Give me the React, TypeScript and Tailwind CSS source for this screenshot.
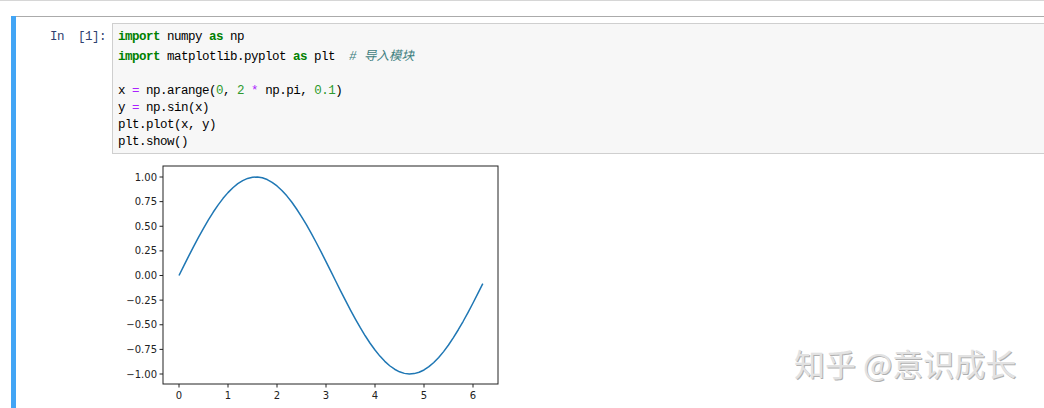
import React from 'react';

// data for the sine plot: same arange(0, 2*pi, 0.1) as the code cell
const xs: number[] = [];
for (let i = 0; i * 0.1 < 2 * Math.PI; i++) xs.push(i * 0.1);

const px = (x: number) => 67 + 49 * x;
const py = (y: number) => 121.5 - 98.5 * y;

const curve = xs.map((x, i) => `${i === 0 ? 'M' : 'L'}${px(x).toFixed(2)},${py(Math.sin(x)).toFixed(2)}`).join(' ');

const yTicks = [1, 0.75, 0.5, 0.25, 0, -0.25, -0.5, -0.75, -1];
const xTicks = [0, 1, 2, 3, 4, 5, 6];

const fmt = (v: number) => (v < 0 ? '\u2212' : '') + Math.abs(v).toFixed(2);

const Kw = ({ children }: { children: React.ReactNode }) => (
  <span className="font-bold text-[#008000]">{children}</span>
);
const Op = ({ children }: { children: React.ReactNode }) => <span className="text-[#aa22ff]">{children}</span>;
const Num = ({ children }: { children: React.ReactNode }) => <span className="text-[#2e9a2e]">{children}</span>;

const SinePlot = () => (
  <svg width={400} height={255} className="block" style={{ fontFamily: '"DejaVu Sans", sans-serif' }}>
    <rect x={51} y={12} width={335} height={218} fill="white" />
    <path d={curve} fill="none" stroke="#1f77b4" strokeWidth={1.5} strokeLinejoin="round" />
    <rect x={51} y={12} width={335} height={218} fill="none" stroke="#222" strokeWidth={1} />
    {yTicks.map((v) => (
      <g key={v}>
        <line x1={47.5} x2={51} y1={py(v)} y2={py(v)} stroke="#222" strokeWidth={1} />
        <text x={45} y={py(v) + 3.5} textAnchor="end" fontSize={10} fill="#222">
          {fmt(v)}
        </text>
      </g>
    ))}
    {xTicks.map((v) => (
      <g key={v}>
        <line x1={px(v)} x2={px(v)} y1={230} y2={233.5} stroke="#222" strokeWidth={1} />
        <text x={px(v)} y={245} textAnchor="middle" fontSize={10} fill="#222">
          {v}
        </text>
      </g>
    ))}
  </svg>
);

const App = () => {
  return (
    <div className="relative h-[408px] w-[1044px] overflow-hidden bg-white border-t border-[#d6d6d6]">
      <div className="mt-[15px] ml-[11px] flex flex-col border-l-[5px] border-[#42a5f5]">
        <div className="border-t border-[#ababab] pt-[6px]">
          {/* input row */}
          <div className="flex">
            <div
              className="w-[96px] shrink-0 pr-[6px] pt-[6px] text-right text-[12.5px] leading-[17px] tracking-[-0.5px] text-[#303f6f]"
              style={{ fontFamily: '"Liberation Mono", monospace' }}
            >
              In&nbsp;&nbsp;[1]:
            </div>
            <div
              className="flex-1 border border-r-0 border-[#cfcfcf] bg-[#f7f7f7] pl-[5px] pt-[5px] pb-[2px] text-[12.5px] leading-[17px] tracking-[-0.5px] text-black whitespace-pre"
              style={{ fontFamily: '"Liberation Mono", "Noto Sans CJK SC", monospace' }}
            >
              <div>
                <Kw>import</Kw> numpy <Kw>as</Kw> np
              </div>
              <div>
                <Kw>import</Kw> matplotlib.pyplot <Kw>as</Kw> plt{'  '}
                <span className="italic text-[#408080] tracking-normal">
                  # <span style={{ fontFamily: '"Noto Sans CJK SC", sans-serif' }}>导入模块</span>
                </span>
              </div>
              <div>&nbsp;</div>
              <div>
                x <Op>=</Op> np.arange(<Num>0</Num>, <Num>2</Num> <Op>*</Op> np.pi, <Num>0.1</Num>)
              </div>
              <div>
                y <Op>=</Op> np.sin(x)
              </div>
              <div>plt.plot(x, y)</div>
              <div>plt.show()</div>
            </div>
          </div>
          {/* output row */}
          <div className="flex">
            <div className="w-[96px] shrink-0" />
            <SinePlot />
          </div>
        </div>
      </div>
      <div
        className="absolute left-[794px] top-[341px] text-[31px] leading-[42px] text-[#e2e2e2] [text-shadow:1px_1px_0_#b0b0b0]"
        style={{ fontFamily: '"Noto Sans CJK SC", sans-serif' }}
      >
        知乎 @意识成长
      </div>
    </div>
  );
};

export default App;
